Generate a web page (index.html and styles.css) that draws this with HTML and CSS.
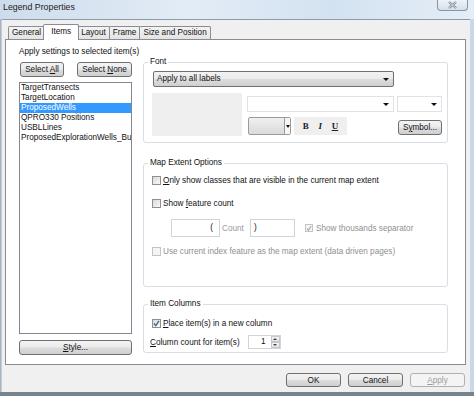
FILE: index.html
```html
<!DOCTYPE html>
<html lang="en">
<head>
  <meta charset="UTF-8" />
  <title>Legend Properties</title>
  <link rel="stylesheet" href="styles.css">
</head>
<body>
  <div class="window">
    <div class="titlebar">
      <span class="title">Legend Properties</span>
      <span class="close">
        <svg width="9" height="8" viewBox="0 0 9 8">
          <path d="M1 1 L8 7 M8 1 L1 7" stroke="#6e7b8a" stroke-width="2.2" fill="none"/>
          <path d="M1 1 L8 7 M8 1 L1 7" stroke="#f4f7fa" stroke-width="0.8" fill="none"/>
        </svg>
      </span>
    </div>

    <div class="client">
      <div class="tabs">
        <span class="tab">General</span>
        <span class="tab active">Items</span>
        <span class="tab">Layout</span>
        <span class="tab">Frame</span>
        <span class="tab">Size and Position</span>
      </div>

      <div class="panel">
        <div class="items-col">
          <div class="hint">Apply settings to selected item(s)</div>
          <div class="btn-row">
            <button class="btn select-all">Select <u>A</u>ll</button>
            <button class="btn select-none">Select <u>N</u>one</button>
          </div>
          <ul class="item-list">
            <li>TargetTransects</li>
            <li>TargetLocation</li>
            <li class="selected">ProposedWells</li>
            <li>QPRO330 Positions</li>
            <li>USBLLines</li>
            <li>ProposedExplorationWells_Buffer</li>
          </ul>
          <button class="btn"><u>S</u>tyle...</button>
        </div>

        <div class="options-col">
          <fieldset class="group font-group">
            <legend>Font</legend>
            <div class="combo apply-combo">Apply to all labels<span class="arrow"></span></div>
            <div class="font-row">
              <div class="preview"></div>
              <div class="font-controls">
                <div class="ctl-row top">
                  <div class="field name-field"><span class="arrow"></span></div>
                  <div class="field size-field"><span class="arrow"></span></div>
                </div>
                <div class="ctl-row bottom">
                  <div class="color-combo"><span class="color-drop"><span class="arrow small"></span></span></div>
                  <div class="styles"><b>B</b><i>I</i><u>U</u></div>
                  <button class="btn symbol">S<u>y</u>mbol...</button>
                </div>
              </div>
            </div>
          </fieldset>

          <fieldset class="group extent-group">
            <legend>Map Extent Options</legend>
            <label class="check-row"><span class="check"></span><span><u>O</u>nly show classes that are visible in the current map extent</span></label>
            <label class="check-row second"><span class="check"></span><span>Show <u>f</u>eature count</span></label>
            <div class="count-row">
              <span class="text-box open">(</span>
              <span class="count-label">Count</span>
              <span class="text-box close-paren">)</span>
              <span class="check checked disabled">
                <svg width="7" height="7" viewBox="0 0 7 7"><path d="M1 3.5 L2.8 5.6 L6 0.8" stroke="#a6a6a6" stroke-width="1.3" fill="none"/></svg>
              </span>
              <span class="muted">Show thousands separator</span>
            </div>
            <label class="check-row disabled last"><span class="check"></span><span>Use current index feature as the map extent (data driven pages)</span></label>
          </fieldset>

          <fieldset class="group columns-group">
            <legend>Item Columns</legend>
            <label class="check-row">
              <span class="check checked">
                <svg width="7" height="7" viewBox="0 0 7 7"><path d="M1 3.5 L2.8 5.6 L6 0.8" stroke="#4a5f97" stroke-width="1.3" fill="none"/></svg>
              </span>
              <span><u>P</u>lace item(s) in a new column</span>
            </label>
            <div class="spin-row">
              <span><u>C</u>olumn count for item(s)</span>
              <span class="spin">
                <span class="spin-val">1</span>
                <span class="spin-btns">
                  <span class="spin-btn"><span class="tri up"></span></span>
                  <span class="spin-btn"><span class="tri down"></span></span>
                </span>
              </span>
            </div>
          </fieldset>
        </div>
      </div>

      <div class="footer">
        <button class="btn dlg">OK</button>
        <button class="btn dlg">Cancel</button>
        <button class="btn dlg" disabled><u>A</u>pply</button>
      </div>
    </div>
  </div>
</body>
</html>
```

FILE: styles.css
```css
* {
  box-sizing: border-box;
  margin: 0;
  padding: 0;
}

body {
  width: 474px;
  height: 396px;
  overflow: hidden;
  font-family: "Liberation Sans", Arial, sans-serif;
  font-size: 8.2px;
  color: #111;
}

.window {
  width: 474px;
  height: 396px;
  display: flex;
  flex-direction: column;
  background: linear-gradient(to right, #9aa6b2 0, #cfdbe8 2px, #dde8f4 50%, #c9d8e8 100%);
  border-bottom: 4px solid #75838f;
}

/* title bar */
.titlebar {
  height: 19px;
  display: flex;
  justify-content: space-between;
  align-items: flex-start;
  padding-left: 3px;
  background: linear-gradient(to right, #cddcec, #e3ecf6 40%, #d3e2f1 70%, #e5eef7);
}

.title {
  padding-top: 2px;
  line-height: 10px;
  font-size: 8.8px;
  color: #1b1b1b;
}

.close {
  width: 31px;
  height: 11px;
  margin-right: 6px;
  display: flex;
  align-items: center;
  justify-content: center;
  border: 1px solid #8794a3;
  border-top: none;
  border-radius: 0 0 4px 4px;
  background: linear-gradient(#eef3f8, #d5e0ec);
}

/* client area */
.client {
  flex: 1;
  margin: 0 4px 0 2px;
  background: #f0f0f0;
  border-top: 1px solid #8e9aa6;
}

.tabs {
  height: 19px;
  display: flex;
  align-items: flex-end;
  padding-left: 6px;
}

.tab {
  height: 13px;
  line-height: 12px;
  padding: 0 3px;
  margin-right: -1px;
  border: 1px solid #898c95;
  border-bottom: none;
  border-radius: 2px 2px 0 0;
  background: linear-gradient(#f4f4f4, #e3e3e3);
}

.tab.active {
  height: 16px;
  line-height: 13px;
  padding: 0 7px;
  margin: 0 -2px -1px -1px;
  position: relative;
  z-index: 1;
  background: #fff;
}

.panel {
  margin: 0 4px 0 3px;
  border: 1px solid #898c95;
  background: #fff;
  display: grid;
  grid-template-columns: 113px 305px;
  column-gap: 11px;
  padding: 7px 0 9px 13px;
}

/* left column */
.items-col {
  display: flex;
  flex-direction: column;
}

.hint {
  line-height: 10px;
  margin-bottom: 5px;
  white-space: nowrap;
}

.btn-row {
  display: flex;
  justify-content: space-between;
  padding-left: 1px;
}

.select-all {
  width: 44px;
}

.select-none {
  width: 55px;
}

.btn {
  height: 15px;
  border: 1px solid #707070;
  border-radius: 3px;
  background: linear-gradient(#f3f3f3 0%, #ebebeb 48%, #dddddd 52%, #cfcfcf 100%);
  font: inherit;
  color: #111;
  line-height: 12px;
}

.item-list {
  list-style: none;
  margin: 5px 0 6px;
  height: 252px;
  border: 1px solid #828790;
  overflow: hidden;
}

.item-list li {
  line-height: 10px;
  padding-left: 1px;
  white-space: nowrap;
}

.item-list li.selected {
  background: #3399ff;
  color: #fff;
}

/* right column */
.options-col {
  margin-top: 10px;
}

.group {
  border: 1px solid #d5dfe5;
  border-radius: 3px;
  margin: 0;
}

.group legend {
  line-height: 10px;
  padding: 0 2px;
  margin-left: -5px;
}

.font-group {
  padding: 4px 5px 6px 9px;
}

.combo {
  position: relative;
  height: 16px;
  line-height: 14px;
  padding-left: 3px;
  border: 1px solid #707070;
  border-radius: 2px;
  background: linear-gradient(#f2f2f2 0%, #ebebeb 48%, #dddddd 52%, #cfcfcf 100%);
}

.apply-combo {
  width: 241px;
  margin-bottom: 6px;
}

.arrow {
  position: absolute;
  right: 4px;
  top: 6px;
  border-left: 3px solid transparent;
  border-right: 3px solid transparent;
  border-top: 3px solid #111;
}

.font-row {
  display: flex;
}

.preview {
  width: 90px;
  height: 43px;
  margin-left: -1px;
  background: #efefef;
}

.font-controls {
  flex: 1;
  margin-left: 5px;
  padding-top: 3px;
}

.ctl-row {
  display: flex;
}

.ctl-row.bottom {
  margin-top: 5px;
  align-items: flex-end;
}

.field {
  position: relative;
  height: 16px;
  border: 1px solid #dfe3e8;
  background: #fff;
}

.name-field {
  width: 147px;
}

.size-field {
  width: 45px;
  margin-left: 3px;
}

.color-combo {
  width: 43px;
  height: 18px;
  margin-left: 1px;
  border: 1px solid #9a9a9a;
  border-radius: 2px;
  background: linear-gradient(#f0f0f0, #dadada);
  display: flex;
  justify-content: flex-end;
}

.color-drop {
  position: relative;
  width: 6px;
  border-left: 1px solid #9a9a9a;
  background: #f6f6f6;
}

.arrow.small {
  right: 0;
  top: 7px;
  border-left-width: 2px;
  border-right-width: 2px;
}

.styles {
  width: 53px;
  height: 18px;
  margin-left: 3px;
  background: #efefef;
  display: flex;
  align-items: center;
  justify-content: space-around;
  padding: 0 4px;
  font-family: "Liberation Serif", "Times New Roman", serif;
  font-size: 9px;
  font-weight: bold;
  color: #222;
}

.styles i,
.styles u {
  font-weight: bold;
}

.symbol {
  margin-left: auto;
  width: 44px;
}

.extent-group {
  margin-top: 15px;
  padding: 6px 5px 29px 8px;
}

.extent-group legend,
.columns-group legend {
  margin-left: -4px;
}

.check-row {
  height: 12px;
  display: flex;
  align-items: center;
  gap: 2px;
  white-space: nowrap;
}

.check-row.second {
  margin-top: 11px;
}

.check-row.last {
  margin-top: 8px;
}

.check {
  width: 9px;
  height: 9px;
  border: 1px solid #8e8f8f;
  background: linear-gradient(135deg, #d8d8d8, #f9f9f9);
  display: flex;
  align-items: center;
  justify-content: center;
  flex-shrink: 0;
}

.check.disabled,
.disabled .check {
  border-color: #c4c4c4;
  background: #f4f4f4;
}

.disabled {
  color: #8f8f8f;
}

.count-row {
  margin-top: 10px;
  height: 18px;
  display: flex;
  align-items: center;
  padding-left: 19px;
  color: #111;
}

.text-box {
  height: 18px;
  line-height: 16px;
  border: 1px solid #d0d4d9;
}

.text-box.open {
  width: 49px;
  text-align: right;
  padding-right: 6px;
}

.text-box.close-paren {
  width: 45px;
  padding-left: 3px;
}

.count-label {
  width: 30px;
  padding-left: 2px;
  color: #9a9a9a;
}

.count-row .check {
  width: 8px;
  height: 8px;
  margin: 0 3px 0 10px;
}

.muted {
  color: #8f8f8f;
}

.columns-group {
  margin-top: 12px;
  padding: 8px 5px 3px 8px;
}

.spin-row {
  margin-top: 6px;
  margin-left: -2px;
  display: flex;
  align-items: center;
  gap: 8px;
}

.spin {
  width: 33px;
  height: 14px;
  border: 1px solid #d0d4d9;
  display: flex;
}

.spin-val {
  flex: 1;
  text-align: right;
  padding-right: 5px;
  line-height: 12px;
}

.spin-btns {
  width: 9px;
  display: flex;
  flex-direction: column;
}

.spin-btn {
  flex: 1;
  border: 1px solid #c5c9ce;
  background: linear-gradient(#f6f6f6, #e2e2e2);
  display: flex;
  align-items: center;
  justify-content: center;
}

.tri {
  border-left: 2px solid transparent;
  border-right: 2px solid transparent;
}

.tri.up {
  border-bottom: 2px solid #444;
}

.tri.down {
  border-top: 2px solid #444;
}

/* dialog buttons */
.footer {
  display: flex;
  justify-content: flex-end;
  gap: 7px;
  padding: 8px 5px 0 0;
}

.btn.dlg {
  width: 55px;
  height: 14px;
  line-height: 11px;
}

.btn:disabled {
  color: #9c9c9c;
  border-color: #adb2b5;
  background: #f4f4f4;
}
```
